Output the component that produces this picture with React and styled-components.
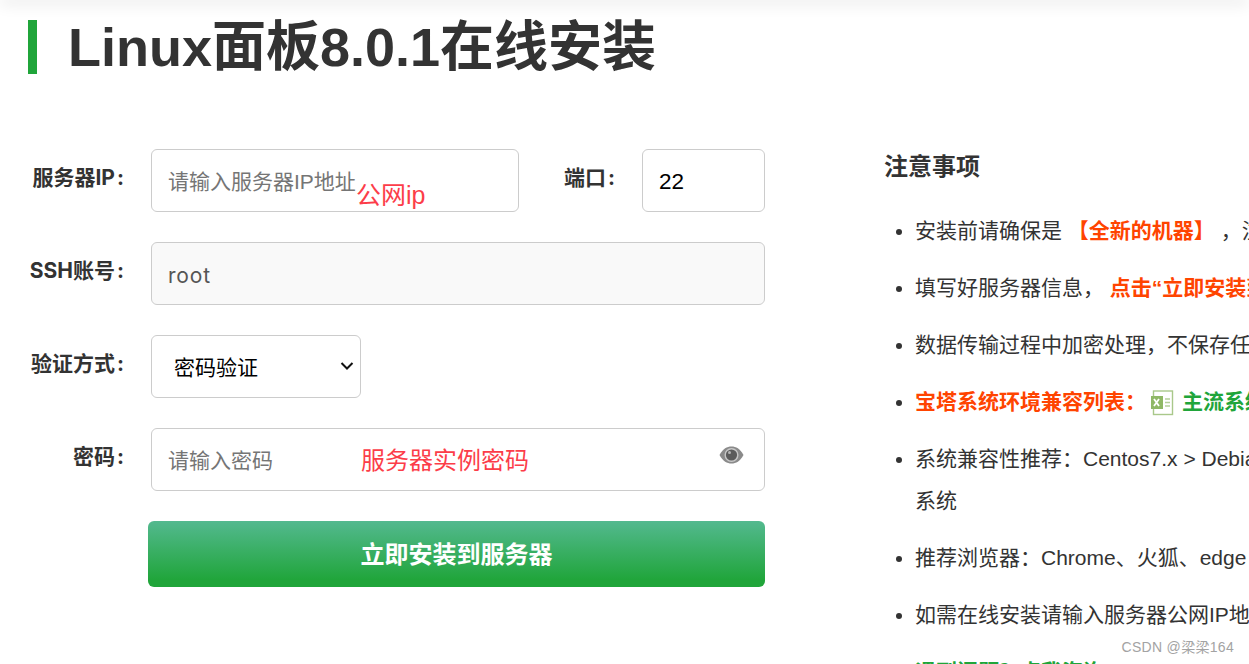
import React from 'react'
import styled, { createGlobalStyle } from 'styled-components'

const GlobalStyle = createGlobalStyle`
    html, body {
        margin: 0;
        padding: 0;
        height: 664px;
        overflow: hidden;
        background: #fff;
    }
    * {
        box-sizing: border-box;
    }
`

const FONT = `"Liberation Sans", "Noto Sans CJK SC", sans-serif`

const Page = styled.div`
    position: relative;
    width: 1249px;
    height: 664px;
    overflow: hidden;
    padding-top: 20px;
    font-family: ${FONT};
    color: #333;
`

const TopShade = styled.div`
    position: absolute;
    top: -4px;
    left: 0;
    right: 0;
    height: 4px;
    box-shadow: 0 2px 16px rgba(0, 0, 0, 0.2);
`

const Title = styled.h1`
    margin: 0 0 0 28px;
    height: 54px;
    padding-left: 31px;
    border-left: 9px solid #20a53a;
    font-size: 54px;
    line-height: 54px;
    font-weight: 700;
    color: #333;
    white-space: nowrap;
`

const Content = styled.div`
    display: flex;
    margin-top: 75px;
`

const Form = styled.div`
    flex: none;
    width: 765px;
    display: flex;
    flex-direction: column;
    gap: 30px;
`

const Row = styled.div`
    display: flex;
    align-items: flex-start;
`

const Label = styled.label`
    flex: none;
    width: ${props => props.$width || 125}px;
    margin-right: 26px;
    padding-right: 1px;
    text-align: right;
    font-family: "Inter", "Noto Sans CJK SC", sans-serif;
    font-size: 21px;
    line-height: 58px;
    font-weight: 700;
    color: #333;
    white-space: nowrap;
`

const Colon = styled.span`
    margin-left: 2px;
`

const Field = styled.div`
    position: relative;
    flex: none;
    width: ${props => props.$width}px;
    height: 63px;
`

const Input = styled.input`
    display: block;
    width: 100%;
    height: 100%;
    padding: 3px 16px 0;
    border: 1px solid #ccc;
    border-radius: 6px;
    outline: none;
    font-family: ${props => props.$soft ? `"Inter", "Noto Sans CJK SC", sans-serif` : FONT};
    font-size: ${props => props.$size || 21}px;
    letter-spacing: ${props => props.$soft ? '0.8px' : '0'};
    color: ${props => props.$soft ? '#555' : '#000'};
    background: ${props => props.$soft ? '#f9f9f9' : '#fff'};
    &::placeholder {
        color: #757575;
        opacity: 1;
    }
`

const Select = styled.select`
    display: block;
    width: 100%;
    height: 100%;
    padding: 2px 0 0 22px;
    border: 1px solid #ccc;
    border-radius: 6px;
    outline: none;
    appearance: none;
    font-family: ${FONT};
    font-size: 21px;
    color: #000;
    background: #fff;
`

const Chevron = styled.svg`
    position: absolute;
    right: 7px;
    top: 26px;
    width: 14px;
    height: 10px;
    pointer-events: none;
`

const Note = styled.span`
    position: absolute;
    left: ${props => props.$left}px;
    top: ${props => props.$top}px;
    font-size: ${props => props.$size || 24}px;
    line-height: 32px;
    color: #fc3d49;
    white-space: nowrap;
    pointer-events: none;
`

const Eye = styled.svg`
    position: absolute;
    right: 21px;
    top: 17px;
    width: 25px;
    height: 20px;
`

const Submit = styled.button`
    display: block;
    width: 617px;
    height: 66px;
    margin-left: 148px;
    padding: 0 0 3px;
    border: 0;
    border-radius: 6px;
    background: linear-gradient(180deg, #53b98f 0%, #20a53a 90%);
    font-family: ${FONT};
    font-size: 24px;
    font-weight: 700;
    color: #fff;
`

const Notes = styled.div`
    flex: none;
    width: 640px;
    margin-left: 119px;
    padding-top: 1px;
`

const NotesTitle = styled.h3`
    margin: 0;
    font-size: 24px;
    line-height: 34px;
    font-weight: 700;
    color: #333;
`

const NotesList = styled.ul`
    margin: 26px 0 0;
    padding: 0 0 0 31px;
    list-style: disc;
`

const NotesItem = styled.li`
    margin-bottom: 15px;
    font-size: 21px;
    line-height: 42px;
    color: #333;
    white-space: nowrap;
`

const Strong = styled.b`
    font-weight: 700;
    color: ${props => props.$green ? '#20a53a' : '#ff4400'};
`

const SheetIcon = styled.svg`
    display: inline-block;
    width: 24px;
    height: 26px;
    margin: 0 8px 0 4px;
    vertical-align: -7px;
`

const Watermark = styled.div`
    position: absolute;
    right: 15px;
    bottom: 8px;
    font-size: 14px;
    line-height: 18px;
    letter-spacing: 0.3px;
    color: #a3a3a3;
    background: rgba(255, 255, 255, 0.85);
    white-space: nowrap;
`

function ExcelIcon() {
    return (
        <SheetIcon viewBox="0 0 24 26">
            <rect x="3.5" y="1" width="19" height="23.5" fill="#fff" stroke="#a9c88a" strokeWidth="1.4" />
            <rect x="1" y="6" width="12" height="13" fill="#8fb866" />
            <path d="M4 9l5 7M9 9l-5 7" stroke="#fff" strokeWidth="1.8" />
            <path d="M15 9h5M15 12.5h5M15 16h5" stroke="#b5cf9b" strokeWidth="1.4" />
        </SheetIcon>
    )
}

function EyeIcon() {
    return (
        <Eye viewBox="0 0 25 20">
            <path d="M0.5 10C4 3.5 8 1.5 12.5 1.5S21 3.5 24.5 10C21 16.5 17 18.5 12.5 18.5S4 16.5 0.5 10Z" fill="#8a8a8a" />
            <circle cx="12.5" cy="10" r="7" fill="#c8c8c8" />
            <circle cx="12.5" cy="10" r="5.6" fill="#5c5c5c" />
            <circle cx="10.5" cy="7.5" r="1.5" fill="#b5b5b5" />
        </Eye>
    )
}

export default function App() {
    return (
        <Page>
            <GlobalStyle />
            <TopShade />
            <Title>Linux面板8.0.1在线安装</Title>
            <Content>
                <Form>
                    <Row>
                        <Label>服务器IP<Colon>:</Colon></Label>
                        <Field $width={368}>
                            <Input placeholder="请输入服务器IP地址" />
                            <Note $left={205} $top={30} $size={25}>公网ip</Note>
                        </Field>
                        <Label $width={97}>端口<Colon>:</Colon></Label>
                        <Field $width={123}>
                            <Input $size={22.5} defaultValue="22" />
                        </Field>
                    </Row>
                    <Row>
                        <Label>SSH账号<Colon>:</Colon></Label>
                        <Field $width={614}>
                            <Input $soft defaultValue="root" />
                        </Field>
                    </Row>
                    <Row>
                        <Label>验证方式<Colon>:</Colon></Label>
                        <Field $width={210}>
                            <Select defaultValue="password">
                                <option value="password">密码验证</option>
                                <option value="key">私钥验证</option>
                            </Select>
                            <Chevron viewBox="0 0 14 10">
                                <path d="M1.5 2L7 7.5L12.5 2" fill="none" stroke="#111" strokeWidth="2" />
                            </Chevron>
                        </Field>
                    </Row>
                    <Row>
                        <Label>密码<Colon>:</Colon></Label>
                        <Field $width={614}>
                            <Input placeholder="请输入密码" />
                            <Note $left={210} $top={17}>服务器实例密码</Note>
                            <EyeIcon />
                        </Field>
                    </Row>
                    <Submit>立即安装到服务器</Submit>
                </Form>
                <Notes>
                    <NotesTitle>注意事项</NotesTitle>
                    <NotesList>
                        <NotesItem>安装前请确保是 <Strong>【全新的机器】</Strong> ，注意备份数据</NotesItem>
                        <NotesItem>填写好服务器信息， <Strong>点击“立即安装到服务器”</Strong></NotesItem>
                        <NotesItem>数据传输过程中加密处理，不保存任何服务器信息</NotesItem>
                        <NotesItem>
                            <Strong>宝塔系统环境兼容列表：</Strong>
                            <ExcelIcon />
                            <Strong $green>主流系统兼容列表</Strong>
                        </NotesItem>
                        <NotesItem>系统兼容性推荐：Centos7.x &gt; Debian10 &gt; Ubuntu<br />系统</NotesItem>
                        <NotesItem>推荐浏览器：Chrome、火狐、edge</NotesItem>
                        <NotesItem>如需在线安装请输入服务器公网IP地址</NotesItem>
                        <NotesItem><Strong $green>遇到问题？点我咨询</Strong></NotesItem>
                    </NotesList>
                </Notes>
            </Content>
            <Watermark>CSDN @梁梁164</Watermark>
        </Page>
    )
}
